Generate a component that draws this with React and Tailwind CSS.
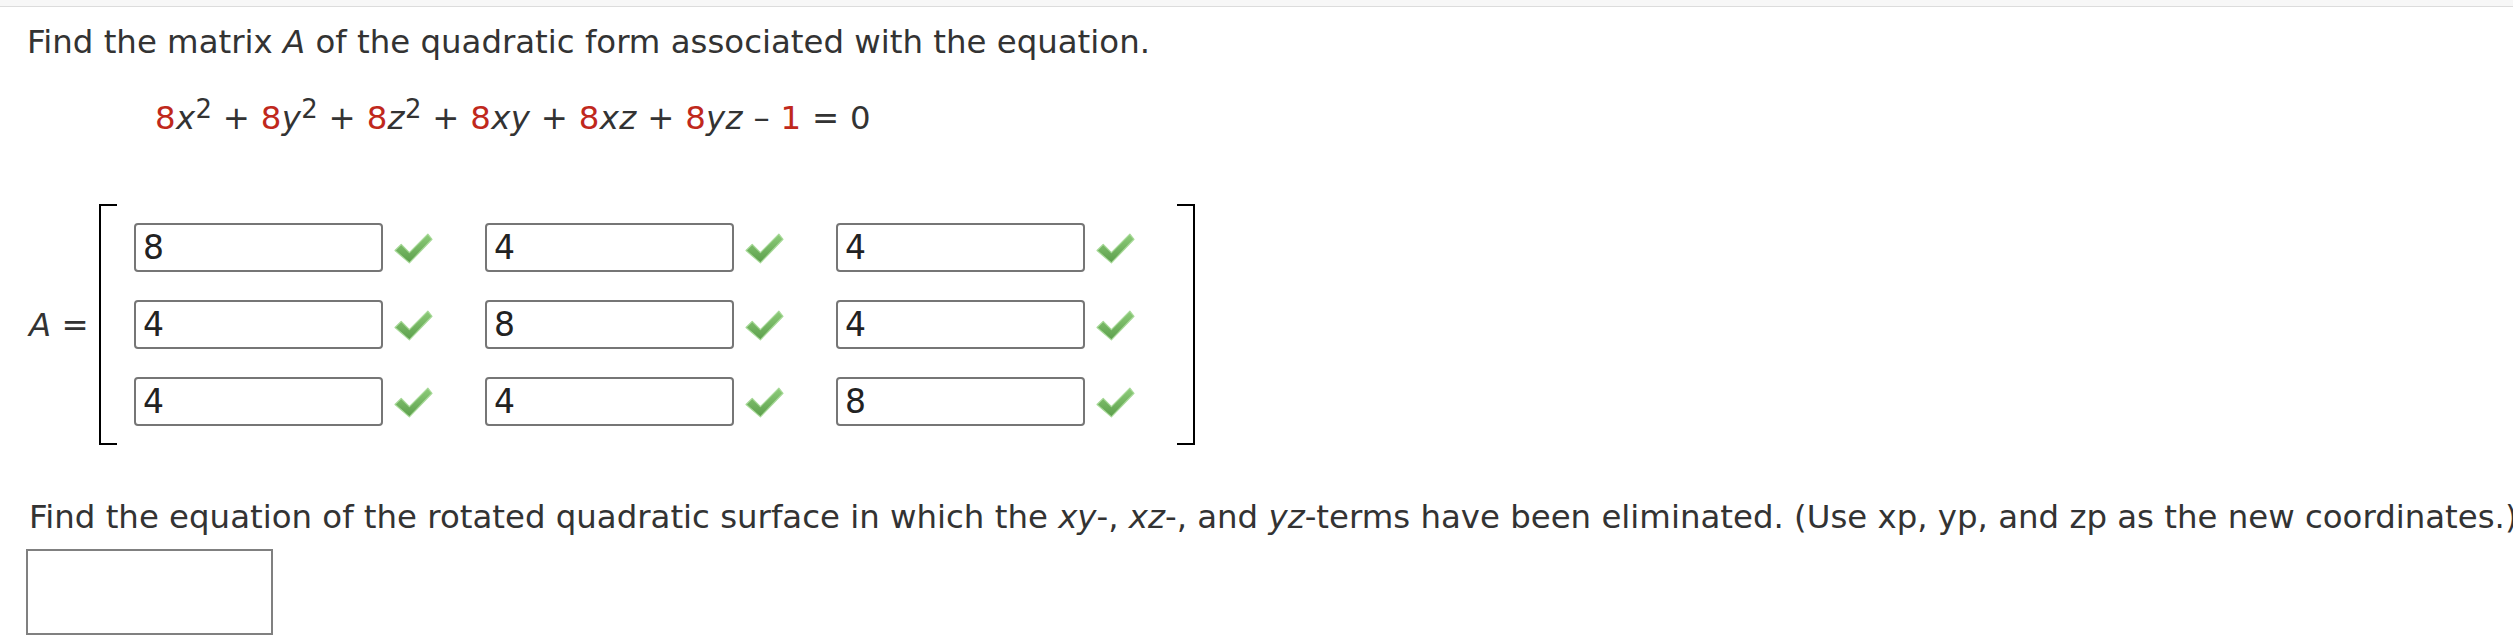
import React from 'react';

const rows = [
  ['8', '4', '4'],
  ['4', '8', '4'],
  ['4', '4', '8'],
];

function Check() {
  return (
    <svg viewBox="0 0 38 30" className="w-[39px] h-[31px] mt-[10px] shrink-0">
      <defs>
        <linearGradient id="chk" x1="0" y1="0" x2="0" y2="1">
          <stop offset="0" stopColor="#8ccb78" />
          <stop offset="1" stopColor="#5c9f4c" />
        </linearGradient>
      </defs>
      <polygon
        points="1,17 7,11 15,19 33,1 37,6 15,29"
        fill="url(#chk)"
        stroke="#a7d998"
        strokeWidth="1.2"
        strokeLinejoin="round"
      />
    </svg>
  );
}

// red coefficient
const C = ({ children }) => <span className="text-[#c0281c]">{children}</span>;
const V = ({ children }) => <span className="italic">{children}</span>;
const Sup = ({ children }) => (
  <span className="relative -top-[0.42em] text-[0.8em] leading-none">{children}</span>
);

export default function App() {
  return (
    <div className="w-[2513px] h-[636px] overflow-hidden bg-white text-[#333] font-['DejaVu_Sans','Verdana',sans-serif] text-[32.4px] leading-[40px]">
      {/* top strip */}
      <div className="h-[7px] bg-[#f7f7f7] border-b border-[#dcdcdc]" />

      <p className="mt-[15px] pl-[27px] whitespace-nowrap">
        Find the matrix <V>A</V> of the quadratic form associated with the equation.
      </p>

      <p className="mt-[36px] pl-[155px] whitespace-nowrap tracking-[0.3px]">
        <C>8</C><V>x</V><Sup>2</Sup> + <C>8</C><V>y</V><Sup>2</Sup> + <C>8</C><V>z</V><Sup>2</Sup> + <C>8</C><V>xy</V> + <C>8</C><V>xz</V> + <C>8</C><V>yz</V> – <C>1</C> = 0
      </p>

      {/* matrix */}
      <div className="mt-[66px] flex pl-[29px]">
        <div className="w-[70px] shrink-0 flex items-center whitespace-nowrap">
          <V>A</V>&nbsp;=
        </div>
        <div className="w-[18px] border-l-2 border-y-2 border-black" />
        <div className="pl-[17px] pr-[42px] py-[19px] grid grid-cols-3 gap-x-[52px] gap-y-[28px]">
          {rows.flat().map((v, i) => (
            <div key={i} className="flex items-start gap-[11px]">
              <div className="w-[249px] h-[49px] border-2 border-[#767676] rounded-[4px] pl-[7px] flex items-center text-[#222] text-[33px]">
                {v}
              </div>
              <Check />
            </div>
          ))}
        </div>
        <div className="w-[18px] border-r-2 border-y-2 border-black" />
      </div>

      <p className="mt-[52px] pl-[29px] whitespace-nowrap">
        Find the equation of the rotated quadratic surface in which the <V>xy</V>-, <V>xz</V>-, and <V>yz</V>-terms have been eliminated. (Use xp, yp, and zp as the new coordinates.)
      </p>

      <div className="mt-[12px] ml-[26px] w-[247px] h-[86px] border-2 border-[#808080]" />
    </div>
  );
}
